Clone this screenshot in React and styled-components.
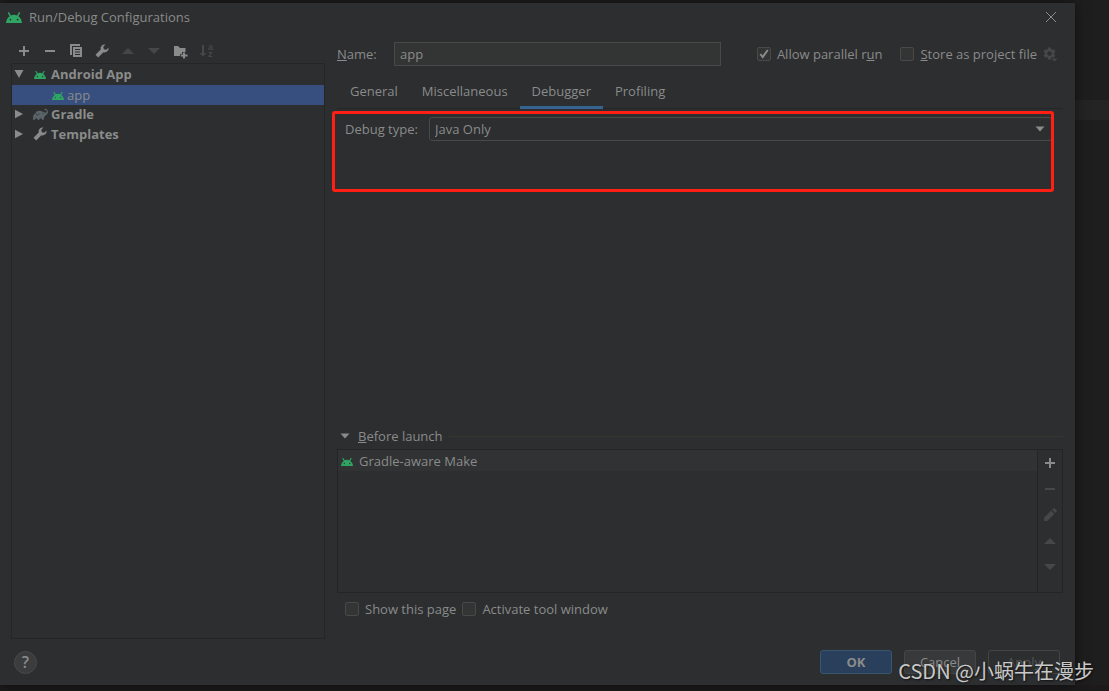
import { useState } from "react";
import styled, { createGlobalStyle, css } from "styled-components";
import { MdSettings } from "react-icons/md";
import { SiGradle } from "react-icons/si";

const colors = {
  page: "#1e1e1e",
  dialog: "#2c2e2f",
  text: "#8a8b8b",
  muted: "#464848",
  line: "#242526",
  control: "#484a4a",
  field: "#333534",
  selection: "#374f7e",
  accent: "#366390",
  android: "#2ea563",
  mark: "#ff1f14",
};

const GlobalStyle = createGlobalStyle`
  * {
    box-sizing: border-box;
  }

  body {
    margin: 0;
    background: ${colors.page};
    color: ${colors.text};
    font-family: "Open Sans", "Noto Sans CJK SC", sans-serif;
    font-size: 13px;
    line-height: 20px;
  }

  button, input, select {
    font: inherit;
    color: inherit;
  }

  ul {
    list-style: none;
    margin: 0;
    padding: 0;
  }
`;

const Screen = styled.div`
  display: grid;
  grid-template-columns: minmax(0, 1fr) 34px;
  grid-template-rows: minmax(0, 1fr) 6px;
  min-height: 100vh;
  padding-top: 3px;
  position: relative;
`;

const EditorEdge = styled.div`
  padding-top: 97px;

  &::before {
    content: "";
    display: block;
    height: 20px;
    background: #242424;
  }
`;

const StatusEdge = styled.div`
  grid-column: 1 / -1;
  background: #1c1a1b;
`;

const Dialog = styled.main`
  display: flex;
  flex-direction: column;
  background: ${colors.dialog};
  box-shadow: 0 0 12px rgba(0, 0, 0, 0.5);
  position: relative;
`;

const TitleBar = styled.header`
  display: flex;
  align-items: center;
  gap: 7px;
  height: 30px;
  padding: 0 16px 2px 6px;

  h1 {
    flex: 1;
    margin: 0;
    font-size: 13px;
    font-weight: 400;
  }
`;

const IconButton = styled.button`
  display: flex;
  align-items: center;
  justify-content: center;
  width: 16px;
  height: 16px;
  padding: 0;
  border: none;
  background: none;
  color: ${(props) => (props.disabled ? colors.muted : colors.text)};
`;

const Body = styled.div`
  flex: 1;
  display: grid;
  grid-template-columns: 314px minmax(0, 1fr);
  column-gap: 12px;
  padding: 0 12px 0 11px;
`;

const Sidebar = styled.aside`
  display: flex;
  flex-direction: column;
  padding-top: 10px;
`;

const Toolbar = styled.div`
  display: flex;
  gap: 10px;
  padding: 0 5px 4px;
`;

const Tree = styled.ul`
  && {
    flex: 1;
    border: 1px solid ${colors.line};
    padding-top: 1px;
  }
`;

const TreeRow = styled.button`
  display: flex;
  align-items: center;
  width: 100%;
  height: 20px;
  padding: 0 0 ${(props) => (props.$nested ? 0 : 2)}px ${(props) => (props.$nested ? 38 : 2)}px;
  border: none;
  background: ${(props) => (props.$selected ? colors.selection : "none")};
  font-weight: ${(props) => (props.$nested ? 400 : 700)};
  text-align: left;

  span {
    display: flex;
    justify-content: center;
    width: 16px;
    margin-left: ${(props) => (props.$nested ? 0 : 8)}px;
    margin-right: ${(props) => (props.$nested ? 1 : 3)}px;
  }
`;

const Editor = styled.section`
  display: flex;
  flex-direction: column;
  padding-top: 9px;
`;

const NameRow = styled.div`
  display: flex;
  align-items: center;
  padding-right: 5px;
`;

const NameLabel = styled.label`
  width: 57px;
`;

const NameInput = styled.input`
  flex: 1;
  min-width: 80px;
  height: 24px;
  margin-right: 36px;
  padding: 0 5px;
  border: 1px solid ${colors.control};
  background: ${colors.field};
  outline: none;
`;

const CheckLabel = styled.label`
  display: flex;
  align-items: center;
  gap: 6px;
  white-space: nowrap;
`;

const CheckBox = styled.span`
  display: grid;

  input,
  svg {
    grid-area: 1 / 1;
    width: 14px;
    height: 14px;
    margin: 0;
  }

  input {
    appearance: none;
    border: 1px solid ${colors.control};
    border-radius: 2px;
    background: ${colors.field};
  }

  svg {
    pointer-events: none;
  }
`;

const StoreGroup = styled.div`
  display: flex;
  align-items: center;
  gap: 5px;
  margin-left: 18px;
`;

const Tabs = styled.div`
  display: flex;
  margin-top: 9px;
  height: 34px;
  padding-left: 1px;
  border-bottom: 1px solid ${colors.line};
`;

const Tab = styled.button`
  height: 34px;
  padding: 0 12px;
  border: none;
  border-bottom: 3px solid transparent;
  background: none;
  ${(props) =>
    props.$active &&
    css`
      border-bottom-color: ${colors.accent};
    `}
`;

const Panel = styled.div`
  flex: 1;
  position: relative;
  padding: 8px 11px 0 8px;
`;

const DebugRow = styled.div`
  display: flex;
  align-items: center;

  label {
    width: 84px;
  }
`;

const SelectBox = styled.div`
  flex: 1;
  display: grid;
  align-items: center;

  select,
  svg {
    grid-area: 1 / 1;
  }

  select {
    appearance: none;
    width: 100%;
    height: 24px;
    padding: 0 5px;
    border: 1px solid ${colors.control};
    border-radius: 3px;
    background: ${colors.dialog};
    outline: none;
  }

  svg {
    justify-self: end;
    margin-right: 4px;
    pointer-events: none;
  }
`;

const Highlight = styled.div`
  position: absolute;
  top: 2px;
  left: -5px;
  right: 9px;
  height: 81px;
  border: 3px solid ${colors.mark};
  border-radius: 3px;
  pointer-events: none;
`;

const Legend = styled.button`
  display: flex;
  align-items: center;
  width: 100%;
  height: 20px;
  padding: 0;
  border: none;
  background: none;

  span {
    margin: 0 6px 0 5px;
  }

  &::after {
    content: "";
    flex: 1;
    border-top: 1px solid #373732;
  }
`;

const TaskBox = styled.div`
  display: flex;
  margin-top: 3px;
  border: 1px solid ${colors.line};

  ul {
    flex: 1;
  }

  li {
    display: flex;
    align-items: center;
    gap: 4px;
    height: 21px;
    padding: 1px 1px 0;
    background: #313233;
  }
`;

const TaskTools = styled.div`
  display: flex;
  flex-direction: column;
  gap: 10px;
  padding: 5px 4px 17px;
  border-left: 1px solid ${colors.line};
`;

const LaunchOptions = styled.div`
  display: flex;
  gap: 6px;
  padding: 6px 8px 20px;
`;

const Footer = styled.footer`
  display: flex;
  align-items: center;
  gap: 12px;
  padding: 11px 15px 11px 14px;
`;

const HelpButton = styled.button`
  width: 23px;
  height: 23px;
  margin-right: auto;
  padding: 0;
  border: 1px solid ${colors.control};
  border-radius: 50%;
  background: #3a3c3d;
  font-size: 16px;
  font-weight: 600;
  line-height: 20px;
`;

const DialogButton = styled.button`
  width: 72px;
  height: 24px;
  padding: 0;
  border: 1px solid ${(props) => (props.$primary ? "#39566f" : "#434546")};
  border-radius: 3px;
  background: ${(props) => (props.$primary ? "#293f5c" : "#37393a")};
  font-weight: ${(props) => (props.$primary ? 700 : 400)};

  &:disabled {
    background: none;
    color: #535555;
  }
`;

const Watermark = styled.div`
  position: absolute;
  right: 15px;
  bottom: 6px;
  color: #c9c9c9;
  font-family: "Noto Sans CJK SC", sans-serif;
  font-size: 20px;
  line-height: 28px;
  text-shadow: 1px 1px 2px #111;
  pointer-events: none;
`;

const Svg = ({ size = 16, children }) => (
  <svg width={size} height={size} viewBox="0 0 16 16" fill="currentColor" aria-hidden="true">
    {children}
  </svg>
);

const AndroidIcon = ({ width = 12 }) => (
  <svg width={width} height={width * 0.75} viewBox="0 0 16 12" fill={colors.android} aria-hidden="true">
    <path
      fillRule="evenodd"
      d="M0 12C.2 9 1.600 6.600 3.600 5.200L1.700 1.700 3 1 4.900 4.400A8.500 8.500 0 0 1 11.100 4.400L13 1 14.300 1.700 12.400 5.200C14.400 6.600 15.800 9 16 12ZM4.400 7.700a.9.9 0 1 0 0 1.800.9.9 0 0 0 0-1.800ZM11.600 7.700a.9.9 0 1 0 0 1.800.9.9 0 0 0 0-1.800Z"
    />
  </svg>
);

const AddIcon = () => (
  <Svg>
    <path d="M7 3h2v4h4v2H9v4H7V9H3V7h4z" />
  </Svg>
);

const RemoveIcon = () => (
  <Svg>
    <path d="M3 7h10v2H3z" />
  </Svg>
);

const CopyIcon = () => (
  <Svg>
    <path d="M2 1h10v2H4v9H2z" />
    <path fillRule="evenodd" d="M5 4h9v10H5zM7 6v1h5V6zM7 8.500v1h5v-1zM7 11v1h5v-1z" />
  </Svg>
);

const WrenchIcon = () => (
  <Svg>
    <path d="M14.500 4.500A4.100 4.100 0 0 1 9.400 9.300L4.200 14.500 1.500 11.800 6.700 6.600A4.100 4.100 0 0 1 11.500 1.500L9.300 3.700 9.800 6.200 12.300 6.700z" />
  </Svg>
);

const UpIcon = () => (
  <Svg>
    <path d="M2 11h12L8 5z" />
  </Svg>
);

const DownIcon = () => (
  <Svg>
    <path d="M2 5h12l-6 6z" />
  </Svg>
);

const FolderAddIcon = () => (
  <Svg>
    <path d="M2 3h4l2 2h5.500v4H10v2H8v2H2z" />
    <path d="M11 9.500h2v2h2.500v2H13v2h-2v-2H8.800v-2H11z" />
  </Svg>
);

const SortIcon = () => (
  <Svg>
    <path d="M4 2h2v8h2.500L5 13.500 1.500 10H4z" />
    <g fontFamily="Liberation Sans, sans-serif" fontSize="9" fontWeight="700">
      <text x="10" y="7">a</text>
      <text x="10" y="14">z</text>
    </g>
  </Svg>
);

const EditIcon = () => (
  <Svg>
    <path d="M2 14v-3.200l7.200-7.200 3.200 3.200L5.200 14zM10.100 2.700l1.300-1.300a1 1 0 0 1 1.400 0l1.800 1.800a1 1 0 0 1 0 1.400l-1.300 1.300z" />
  </Svg>
);

const CloseIcon = () => (
  <Svg>
    <path d="M3 3l10 10M13 3L3 13" fill="none" stroke="currentColor" />
  </Svg>
);

const GearIcon = () => (
  <Svg>
    <MdSettings size={15} />
    <path d="M9.500 12.500h6L12.500 15.500z" />
  </Svg>
);

const Caret = () => (
  <svg width="16" height="16" viewBox="0 0 16 16" fill="currentColor" aria-hidden="true">
    <path d="M3.500 5.500h9L8 10.500z" />
  </svg>
);

const TreeArrow = ({ open }) => (
  <svg width="10" height="10" viewBox="0 0 10 10" fill="currentColor" aria-hidden="true">
    <path d={open ? "M.500 1h9L5 9z" : "M1 .800v8.400L9 5z"} />
  </svg>
);

const Check = ({ label, defaultChecked = false }) => {
  const [checked, setChecked] = useState(defaultChecked);

  return (
    <CheckLabel>
      <CheckBox>
        <input type="checkbox" checked={checked} onChange={() => setChecked(!checked)} />
        {checked && (
          <svg viewBox="0 0 14 14" fill="none" stroke={colors.text} strokeWidth="2">
            <path d="M3.300 7l2.400 3L10.800 3" />
          </svg>
        )}
      </CheckBox>
      <span>{label}</span>
    </CheckLabel>
  );
};

const tools = [
  { name: "Add", icon: <AddIcon /> },
  { name: "Remove", icon: <RemoveIcon /> },
  { name: "Copy", icon: <CopyIcon /> },
  { name: "Edit templates", icon: <WrenchIcon /> },
  { name: "Move up", icon: <UpIcon />, disabled: true },
  { name: "Move down", icon: <DownIcon />, disabled: true },
  { name: "New folder", icon: <FolderAddIcon /> },
  { name: "Sort", icon: <SortIcon />, disabled: true },
];

const taskTools = [
  { name: "Add task", icon: <AddIcon /> },
  { name: "Remove task", icon: <RemoveIcon />, disabled: true },
  { name: "Edit task", icon: <EditIcon />, disabled: true },
  { name: "Task up", icon: <UpIcon />, disabled: true },
  { name: "Task down", icon: <DownIcon />, disabled: true },
];

const tree = [
  { name: "Android App", icon: <AndroidIcon />, open: true },
  { name: "app", icon: <AndroidIcon />, nested: true },
  { name: "Gradle", icon: <SiGradle size={15} color="#596368" /> },
  { name: "Templates", icon: <WrenchIcon /> },
];

const tabs = ["General", "Miscellaneous", "Debugger", "Profiling"];

const ToolButtons = ({ items }) =>
  items.map(({ name, icon, disabled }) => (
    <IconButton key={name} type="button" aria-label={name} disabled={disabled}>
      {icon}
    </IconButton>
  ));

const App = () => {
  const [selected, setSelected] = useState("app");
  const [activeTab, setActiveTab] = useState("Debugger");

  return (
    <>
      <GlobalStyle />
      <Screen>
        <Dialog>
          <TitleBar>
            <AndroidIcon width={16} />
            <h1>Run/Debug Configurations</h1>
            <IconButton type="button" aria-label="Close">
              <CloseIcon />
            </IconButton>
          </TitleBar>

          <Body>
            <Sidebar>
              <Toolbar>
                <ToolButtons items={tools} />
              </Toolbar>
              <Tree>
                {tree.map(({ name, icon, nested, open }) => (
                  <li key={name}>
                    <TreeRow
                      type="button"
                      $nested={nested}
                      $selected={selected === name}
                      onClick={() => setSelected(name)}
                    >
                      {!nested && <TreeArrow open={open} />}
                      <span>{icon}</span>
                      {name}
                    </TreeRow>
                  </li>
                ))}
              </Tree>
            </Sidebar>

            <Editor>
              <NameRow>
                <NameLabel htmlFor="name">
                  <u>N</u>ame:
                </NameLabel>
                <NameInput id="name" type="text" defaultValue="app" />
                <Check defaultChecked label={<>Allow parallel r<u>u</u>n</>} />
                <StoreGroup>
                  <Check label={<><u>S</u>tore as project file</>} />
                  <IconButton type="button" aria-label="Storage options" disabled>
                    <GearIcon />
                  </IconButton>
                </StoreGroup>
              </NameRow>

              <Tabs role="tablist">
                {tabs.map((tab) => (
                  <Tab
                    key={tab}
                    type="button"
                    role="tab"
                    aria-selected={activeTab === tab}
                    $active={activeTab === tab}
                    onClick={() => setActiveTab(tab)}
                  >
                    {tab}
                  </Tab>
                ))}
              </Tabs>

              <Panel>
                <DebugRow>
                  <label htmlFor="debug-type">Debug type:</label>
                  <SelectBox>
                    <select id="debug-type" defaultValue="Java Only">
                      <option>Java Only</option>
                    </select>
                    <Caret />
                  </SelectBox>
                </DebugRow>
                <Highlight />
              </Panel>

              <Legend type="button" aria-expanded="true">
                <Caret />
                <span>
                  <u>B</u>efore launch
                </span>
              </Legend>
              <TaskBox>
                <ul>
                  <li>
                    <IconButton as="span">
                      <AndroidIcon />
                    </IconButton>
                    Gradle-aware Make
                  </li>
                </ul>
                <TaskTools>
                  <ToolButtons items={taskTools} />
                </TaskTools>
              </TaskBox>
              <LaunchOptions>
                <Check label="Show this page" />
                <Check label="Activate tool window" />
              </LaunchOptions>
            </Editor>
          </Body>

          <Footer>
            <HelpButton type="button" aria-label="Help">?</HelpButton>
            <DialogButton type="button" $primary>OK</DialogButton>
            <DialogButton type="button">Cancel</DialogButton>
            <DialogButton type="button" disabled>Apply</DialogButton>
          </Footer>
        </Dialog>
        <EditorEdge />
        <StatusEdge />
        <Watermark>CSDN @小蜗牛在漫步</Watermark>
      </Screen>
    </>
  );
};

export default App;
